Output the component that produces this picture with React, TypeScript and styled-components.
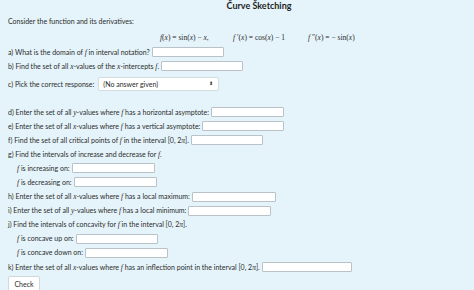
import styled, { createGlobalStyle } from 'styled-components';

const GlobalStyle = createGlobalStyle`
  html, body {
    margin: 0;
    padding: 0;
    background: #e5f4fa;
  }
  body {
    font-family: Lato, 'Open Sans', sans-serif;
    color: #2b2b2b;
  }
`;

const Page = styled.div`
  width: 474px;
  height: 290px;
  overflow: hidden;
  padding: 0 8px;
  box-sizing: border-box;
  font-size: 7px;
`;

const Title = styled.div`
  text-align: center;
  font-weight: 700;
  font-size: 9px;
  padding-left: 44px;
  height: 12px;
  line-height: 12px;
  color: #1e1e1e;
`;

const Intro = styled.div`
  margin-top: 4px;
  height: 10px;
  line-height: 10px;
`;

const Formulas = styled.div`
  display: flex;
  margin-top: 5px;
  padding-left: 152px;
  height: 12px;
  align-items: center;
  font-family: 'Liberation Serif', serif;
  font-size: 7.5px;
`;

const Formula = styled.span<{ $w: number }>`
  width: ${(p) => p.$w}px;
  white-space: nowrap;
`;

const Row = styled.div<{ $indent?: boolean; $h?: number; $top?: number }>`
  display: flex;
  align-items: center;
  gap: 2px;
  height: ${(p) => p.$h ?? 14.1}px;
  margin-top: ${(p) => p.$top ?? 0}px;
  padding-left: ${(p) => (p.$indent ? 9 : 0)}px;
`;

const Label = styled.span`
  white-space: nowrap;
`;

const I = styled.i`
  font-family: 'Liberation Serif', serif;
  font-size: 7.5px;
`;

const Input = styled.div<{ $w: number }>`
  width: ${(p) => p.$w}px;
  height: 10px;
  background: #fff;
  border: 1px solid #b9c2c6;
  border-radius: 1px;
  box-sizing: border-box;
  flex-shrink: 0;
`;

const Select = styled.div`
  width: 121px;
  height: 14px;
  margin-left: 2px;
  background: #fff;
  border: 1px solid #d4dde0;
  border-radius: 2px;
  box-sizing: border-box;
  display: flex;
  align-items: center;
  justify-content: space-between;
  padding: 0 5px 0 4px;
  font-size: 7px;
`;

const Arrows = styled.span`
  font-size: 5px;
  line-height: 1;
`;

const Button = styled.div`
  margin-top: 2px;
  width: 32px;
  height: 16px;
  background: #fff;
  border: 1px solid #d0d8dc;
  border-radius: 2px;
  box-sizing: border-box;
  display: flex;
  align-items: center;
  justify-content: center;
  font-size: 7px;
`;

const F = () => <I>f</I>;

export default function App() {
  return (
    <Page>
      <GlobalStyle />
      <Title>Čurve Šketching</Title>
      <Intro>Consider the function and its derivatives:</Intro>
      <Formulas>
        <Formula $w={73}><i>f</i>(<i>x</i>) = sin(<i>x</i>) − <i>x</i>,</Formula>
        <Formula $w={75}><i>f</i> ′(<i>x</i>) = cos(<i>x</i>) − 1</Formula>
        <Formula $w={60}><i>f</i> ″(<i>x</i>) = − sin(<i>x</i>)</Formula>
      </Formulas>
      <Row $top={2}>
        <Label>a) What is the domain of <F /> in interval notation?</Label>
        <Input $w={72} />
      </Row>
      <Row>
        <Label>b) Find the set of all <I>x</I>-values of the <I>x</I>-intercepts <F />.</Label>
        <Input $w={82} />
      </Row>
      <Row $h={21.6}>
        <Label>c) Pick the correct response:</Label>
        <Select>
          (No answer given)
          <Arrows>⬍</Arrows>
        </Select>
      </Row>
      <Row $top={10.2}>
        <Label>d) Enter the set of all <I>y</I>-values where <F /> has a horizontal asymptote:</Label>
        <Input $w={73} />
      </Row>
      <Row>
        <Label>e) Enter the set of all <I>x</I>-values where <F /> has a vertical asymptote:</Label>
        <Input $w={82} />
      </Row>
      <Row>
        <Label>f) Find the set of all critical points of <F /> in the interval [0, 2<I>π</I>].</Label>
        <Input $w={72} />
      </Row>
      <Row>
        <Label>g) Find the intervals of increase and decrease for <F />.</Label>
      </Row>
      <Row $indent>
        <Label><F /> is increasing on:</Label>
        <Input $w={83} />
      </Row>
      <Row $indent>
        <Label><F /> is decreasing on:</Label>
        <Input $w={83} />
      </Row>
      <Row>
        <Label>h) Enter the set of all <I>x</I>-values where <F /> has a local maximum:</Label>
        <Input $w={84} />
      </Row>
      <Row>
        <Label>i) Enter the set of all <I>y</I>-values where <F /> has a local minimum:</Label>
        <Input $w={83} />
      </Row>
      <Row>
        <Label>j) Find the intervals of concavity for <F /> in the interval [0, 2<I>π</I>].</Label>
      </Row>
      <Row $indent>
        <Label><F /> is concave up on:</Label>
        <Input $w={82} />
      </Row>
      <Row $indent>
        <Label><F /> is concave down on:</Label>
        <Input $w={83} />
      </Row>
      <Row>
        <Label>k) Enter the set of all <I>x</I>-values where <F /> has an inflection point in the interval [0, 2<I>π</I>].</Label>
        <Input $w={90} />
      </Row>
      <Button>Check</Button>
    </Page>
  );
}
